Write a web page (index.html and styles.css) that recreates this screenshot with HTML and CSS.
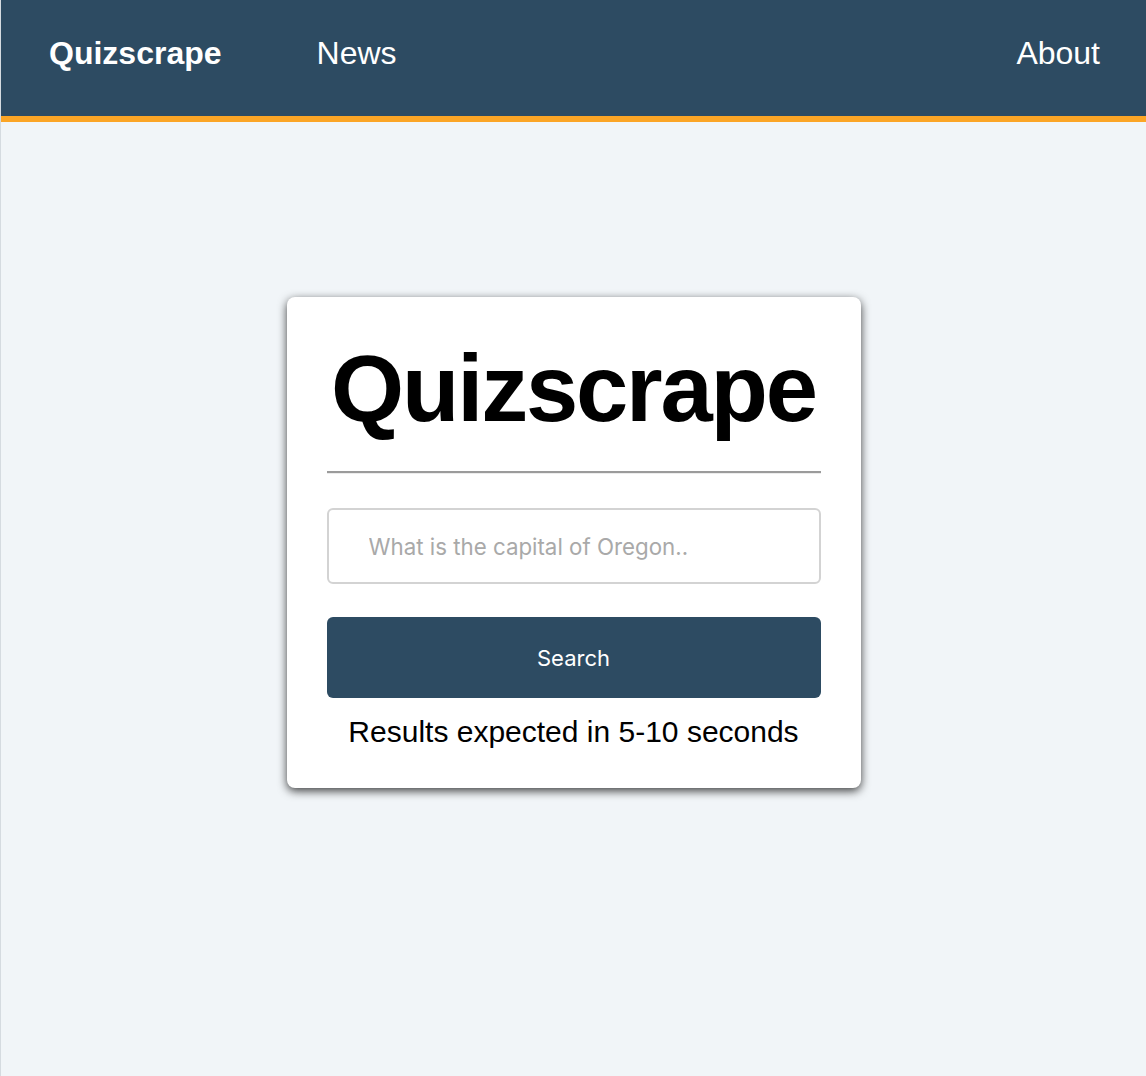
FILE: index.html
```html
<!DOCTYPE html>
<html lang="en">
<head>
<meta charset="utf-8">
<title>Quizscrape</title>
<link rel="stylesheet" href="styles.css">
</head>
<body>
<header class="topbar">
  <nav class="nav">
    <a class="brand" href="#">Quizscrape</a>
    <a class="nav-link" href="#">News</a>
    <a class="nav-link nav-right" href="#">About</a>
  </nav>
</header>
<main class="page">
  <section class="card">
    <h1 class="title">Quizscrape</h1>
    <hr class="divider">
    <form class="search-form" onsubmit="return false;">
      <input class="search-input" type="text" placeholder="What is the capital of Oregon..">
      <button class="search-btn" type="submit">Search</button>
    </form>
    <p class="note">Results expected in 5-10 seconds</p>
  </section>
</main>
</body>
</html>
```

FILE: styles.css
```css
html, body {
  margin: 0;
  padding: 0;
}
body {
  background: #f1f5f8;
  font-family: "Liberation Sans", Arial, Helvetica, sans-serif;
  min-height: 1076px;
  border-left: 1px solid rgba(150, 160, 170, 0.3);
}
.topbar {
  background: #2d4b62;
  border-bottom: 6px solid #fba526;
  height: 116px;
  box-sizing: content-box;
}
.nav {
  display: flex;
  align-items: flex-start;
  padding: 35px 46px 0 48px;
}
.nav a {
  color: #ffffff;
  text-decoration: none;
  font-size: 32px;
  line-height: 37px;
}
.brand {
  font-weight: bold;
  margin-right: 95px;
}
.nav-right {
  margin-left: auto;
}
.page {
  display: flex;
  justify-content: center;
  padding-top: 175px;
}
.card {
  width: 574px;
  box-sizing: border-box;
  background: #ffffff;
  border-radius: 8px;
  box-shadow: 0 3px 10px rgba(0, 0, 0, 0.75);
  padding: 45px 40px 39px;
  text-align: center;
}
.title {
  margin: 0;
  font-size: 94px;
  line-height: 94px;
  font-weight: bold;
  letter-spacing: -2.2px;
  color: #000;
}
.divider {
  margin: 35px 0 0;
  border: 0;
  border-top: 2px solid #9b9b9b;
  border-bottom: 1px solid #ececec;
  height: 0;
}
.search-form {
  display: flex;
  flex-direction: column;
  margin-top: 34px;
}
.search-input {
  height: 76px;
  box-sizing: border-box;
  border: 2px solid #d3d3d3;
  border-radius: 6px;
  padding: 0 40px;
  font-family: Inter, "Noto Sans", sans-serif;
  font-size: 22.3px;
  color: #333;
  outline: none;
}
.search-input::placeholder {
  color: #a9a9a9;
}
.search-btn {
  margin-top: 33px;
  height: 81px;
  border: 0;
  border-radius: 6px;
  background: #2d4b62;
  color: #ffffff;
  font-family: Inter, "Noto Sans", sans-serif;
  font-size: 22px;
  cursor: pointer;
}
.note {
  margin: 16px 0 0;
  font-size: 30px;
  line-height: 35px;
  color: #000;
}
```
